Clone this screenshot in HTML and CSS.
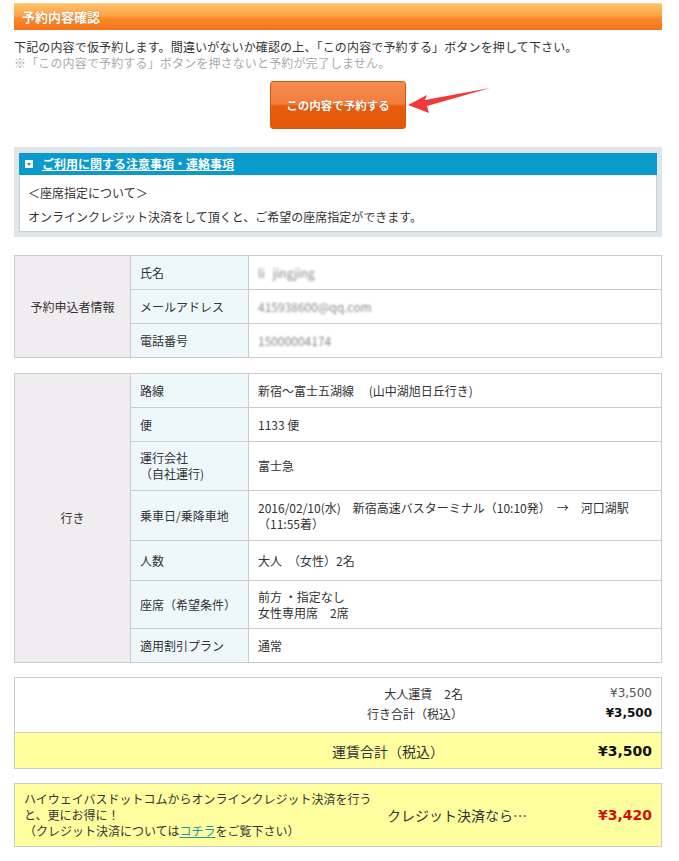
FILE: index.html
```html
<!DOCTYPE html>
<html lang="ja">
<head>
  <meta charset="UTF-8" />
  <title>予約内容確認</title>
  <link rel="stylesheet" href="styles.css">
</head>
<body>

<div class="page">
  <h2 class="page-title">予約内容確認</h2>

  <div class="intro">
    <p>下記の内容で仮予約します。間違いがないか確認の上、「この内容で予約する」ボタンを押して下さい。</p>
    <p class="intro-note">※「この内容で予約する」ボタンを押さないと予約が完了しません。</p>
  </div>

  <div class="submit-row">
    <button class="submit-btn">この内容で予約する</button>
    <!-- red pointer next to the button -->
    <svg class="pointer" width="90" height="30" viewBox="0 0 90 30">
      <polygon points="0,19 19,9 17,14 82,2 19,20 21,27" fill="#ee3a3a"/>
    </svg>
  </div>

  <div class="notice">
    <div class="notice-head">
      <span class="toggle"></span>
      <a href="#">ご利用に関する注意事項・連絡事項</a>
    </div>
    <div class="notice-body">
      <p>＜座席指定について＞</p>
      <p>オンラインクレジット決済をして頂くと、ご希望の座席指定ができます。</p>
    </div>
  </div>

  <table class="info">
    <tr>
      <th class="group" rowspan="3">予約申込者情報</th>
      <th class="label">氏名</th>
      <td class="masked">li&nbsp;&nbsp; jingjing</td>
    </tr>
    <tr>
      <th class="label">メールアドレス</th>
      <td class="masked">415938600@qq.com</td>
    </tr>
    <tr>
      <th class="label">電話番号</th>
      <td class="masked">15000004174</td>
    </tr>
  </table>

  <table class="info">
    <tr class="r34">
      <th class="group" rowspan="7">行き</th>
      <th class="label">路線</th>
      <td>新宿～富士五湖線　 (山中湖旭日丘行き)</td>
    </tr>
    <tr class="r34">
      <th class="label">便</th>
      <td>1133 便</td>
    </tr>
    <tr class="r49">
      <th class="label">運行会社<br>（自社運行)</th>
      <td>富士急</td>
    </tr>
    <tr class="r50">
      <th class="label">乗車日/乗降車地</th>
      <td>2016/02/10(水)　新宿高速バスターミナル（10:10発）　→　河口湖駅<br>（11:55着）</td>
    </tr>
    <tr class="r40">
      <th class="label">人数</th>
      <td>大人　（女性）2名</td>
    </tr>
    <tr class="r48">
      <th class="label">座席（希望条件）</th>
      <td>前方 ・指定なし<br>女性専用席　2席</td>
    </tr>
    <tr class="r34">
      <th class="label">適用割引プラン</th>
      <td>通常</td>
    </tr>
  </table>

  <div class="fare">
    <div class="fare-lines">
      <div class="fare-line">
        <span class="fare-name">大人運賃　2名</span>
        <span class="fare-price">¥3,500</span>
      </div>
      <div class="fare-line">
        <span class="fare-name">行き合計（税込）</span>
        <span class="fare-price strong">¥3,500</span>
      </div>
    </div>
    <div class="fare-total">
      <span class="total-name">運賃合計（税込）</span>
      <span class="total-price">¥3,500</span>
    </div>
  </div>

  <div class="credit">
    <p class="credit-text">ハイウェイバスドットコムからオンラインクレジット決済を行うと、更にお得に！<br>（クレジット決済については<a href="#">コチラ</a>をご覧下さい）</p>
    <span class="credit-label">クレジット決済なら…</span>
    <span class="credit-price">¥3,420</span>
  </div>
</div>

</body>
</html>
```

FILE: styles.css
```css
body {
  margin: 0;
  padding: 0;
  background: #fff;
  color: #333;
  font-family: "Noto Sans CJK JP", "Noto Sans", sans-serif;
  font-size: 12px;
}

p {
  margin: 0;
}

.page {
  width: 648px;
  margin-left: 14px;
  padding-top: 3px;
}

.page-title {
  margin: 0;
  height: 26px;
  line-height: 26px;
  padding-left: 8px;
  font-size: 13px;
  font-weight: bold;
  color: #fff;
  background: linear-gradient(#ffc066 0%, #fca548 45%, #f88a2a 55%, #f6741a 100%);
  border-top: 1px solid #fdd28c;
  text-shadow: 0 0 1px #c85a10;
}

.intro {
  margin-top: 9px;
  line-height: 16px;
  letter-spacing: 0.15px;
}

.intro-note {
  color: #aaa;
}

.submit-row {
  position: relative;
  display: flex;
  justify-content: center;
  margin-top: 10px;
  height: 48px;
}

.submit-btn {
  width: 136px;
  height: 48px;
  border: 1px solid #d45a10;
  border-radius: 3px;
  color: #fff;
  font-family: "Noto Sans CJK JP", sans-serif;
  font-size: 11.5px;
  font-weight: bold;
  background: linear-gradient(#f58c50 0%, #f27d3c 48%, #e85d0c 52%, #e45808 100%);
  text-shadow: 0 0 1px #a04000;
  cursor: pointer;
}

.pointer {
  position: absolute;
  left: 394px;
  top: 5px;
}

.notice {
  margin-top: 18px;
  background: #dfe5e8;
  padding: 6px 5px 5px 5px;
}

.notice-head {
  background: #0a9acb;
  height: 22px;
  line-height: 22px;
  padding-left: 6px;
  display: flex;
  align-items: center;
}

.notice-head a {
  color: #fff;
  font-weight: bold;
  font-size: 12px;
  text-decoration: underline;
}

.toggle {
  width: 8px;
  height: 8px;
  background: #fff;
  margin-right: 9px;
  position: relative;
}

.toggle::after {
  content: "";
  position: absolute;
  left: 2px;
  top: 3px;
  border-left: 2px solid transparent;
  border-right: 2px solid transparent;
  border-top: 3px solid #0a9acb;
}

.notice-body {
  background: #fff;
  border: 1px solid #c9d0d4;
  border-top: none;
  padding: 6px 8px 2px 8px;
  line-height: 24px;
}

.info {
  width: 648px;
  border-collapse: collapse;
  margin-top: 18px;
}

.info + .info {
  margin-top: 15px;
}

.info th,
.info td {
  border: 1px solid #ccc;
  font-weight: normal;
  text-align: left;
  height: 33px;
  padding: 0 9px;
  line-height: 16px;
}

.info .group {
  width: 97px;
  text-align: center;
  background: #efedf0;
}

.info .label {
  width: 99px;
  background: #eef8fb;
}

.info .r34 th, .info .r34 td { height: 33px; }
.info .r49 th, .info .r49 td { height: 48px; }
.info .r50 th, .info .r50 td { height: 49px; }
.info .r40 th, .info .r40 td { height: 39px; }
.info .r48 th, .info .r48 td { height: 47px; }

.masked {
  color: #888;
  filter: blur(1.2px);
}

.fare {
  margin-top: 14px;
  border: 1px solid #ccc;
}

.fare-lines {
  padding: 5px 9px 9px 0;
}

.fare-line {
  display: flex;
  justify-content: flex-end;
  align-items: center;
  height: 20px;
}

.fare-name {
  width: 300px;
  text-align: right;
}

.fare-price {
  width: 189px;
  text-align: right;
  font-family: "DejaVu Sans", Verdana, sans-serif;
  font-size: 12px;
  color: #555;
}

.fare-price.strong {
  font-weight: bold;
  color: #111;
}

.fare-total {
  display: flex;
  justify-content: flex-end;
  align-items: center;
  height: 35px;
  padding-right: 9px;
  background: #ffffa0;
  border-top: 1px solid #ccc;
}

.total-name {
  font-size: 14px;
  width: 300px;
  text-align: right;
  margin-right: 88px;
}

.total-price {
  width: 120px;
  text-align: right;
  font-family: "DejaVu Sans", Verdana, sans-serif;
  font-size: 14px;
  font-weight: bold;
  color: #111;
}

.credit {
  margin-top: 14px;
  background: #ffffa0;
  border: 1px solid #ccc;
  height: 62px;
  display: flex;
  align-items: center;
  padding: 0 9px;
}

.credit-text {
  width: 356px;
  line-height: 16px;
}

.credit-text a {
  color: #1a9aa8;
  text-decoration: underline;
}

.credit-label {
  font-size: 14px;
  margin-left: 7px;
  width: 180px;
}

.credit-price {
  margin-left: auto;
  font-family: "DejaVu Sans", Verdana, sans-serif;
  font-size: 14px;
  font-weight: bold;
  color: #d80c0c;
}
```
